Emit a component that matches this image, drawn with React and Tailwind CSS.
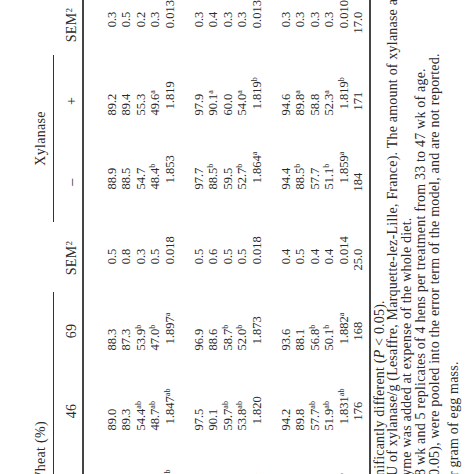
import React from "react";

// cells are "int.frac^sup"; empty rows are group headings whose labels are cut off
const rows = [
  null,
  ["", "89.0", "88.3", "0.5", "88.9", "89.2", "0.3"],
  ["", "89.3", "87.3", "0.8", "88.5", "89.4", "0.5"],
  ["", "54.4^ab", "53.9^b", "0.3", "54.7", "55.3", "0.2"],
  ["", "48.7^ab", "47.0^b", "0.5", "48.4^b", "49.6^a", "0.3"],
  ["1.866^ab", "1.847^ab", "1.897^a", "0.018", "1.853", "1.819", "0.013"],
  null,
  ["", "97.5", "96.9", "0.5", "97.7", "97.9", "0.3"],
  ["", "90.1", "88.6", "0.6", "88.5^b", "90.1^a", "0.4"],
  ["", "59.7^ab", "58.7^b", "0.5", "59.5", "60.0", "0.3"],
  ["", "53.8^ab", "52.0^b", "0.5", "52.7^b", "54.0^a", "0.3"],
  ["1.803^a", "1.820", "1.873", "0.018", "1.864^a", "1.819^b", "0.013"],
  null,
  ["", "94.2", "93.6", "0.4", "94.4", "94.6", "0.3"],
  ["", "89.8", "88.1", "0.5", "88.5^b", "89.8^a", "0.3"],
  ["", "57.7^ab", "56.8^b", "0.4", "57.7", "58.8", "0.3"],
  ["", "51.9^ab", "50.1^b", "0.4", "51.1^b", "52.3^a", "0.3"],
  ["1.807^b", "1.831^ab", "1.882^a", "0.014", "1.859^a", "1.819^b", "0.010"],
  ["", "176", "168", "25.0", "184", "171", "17.0"],
];

// width of the box each header (and whole-number cell) is centred in
const heads = ["w-[94px]", "w-[94px]", "w-[94px]", "w-[80px]", "w-[70px]", "w-[84px]", "w-[72px]"];

const Num = ({ v, col }) => {
  if (!v) return <div />;
  const [n, s] = v.split("^");
  const i = n.indexOf(".");
  if (i < 0) return <div className={`${heads[col]} text-center`}>{n}</div>;
  return (
    <div className="flex whitespace-nowrap">
      <span className="w-[40px] text-right">{n.slice(0, i)}</span>
      <span>
        {n.slice(i)}
        {s && <sup className="text-[8px] leading-none">{s}</sup>}
      </span>
    </div>
  );
};

const grid = "grid grid-cols-[75px_81px_80px_80px_81px_74px_82px_61px]";
const Sup2 = () => <sup className="text-[9px] leading-none">2</sup>;

export default function App() {
  return (
    <div className="w-[474px] h-[474px] overflow-hidden bg-white text-[#2a2a2a] font-['Liberation_Serif',serif]">
      <div className="w-[474px] h-[474px] -rotate-90">
        <div className="ml-[-140px] w-[800px] pt-[32px]">
          {/* spanner headings */}
          <div className="flex h-[17px] items-center text-[14px] tracking-[0.3px] leading-none whitespace-nowrap">
            <div className="w-[10px]" />
            <div className="w-[302px] text-center">Wheat (%)</div>
            <div className="w-[80px]" />
            <div className="w-[167px] text-center">Xylanase</div>
          </div>
          <div className="flex h-px mt-[4px]">
            <div className="w-[10px]" />
            <div className="w-[312px] bg-[#333]" />
            <div className="w-[70px]" />
            <div className="w-[167px] bg-[#333]" />
          </div>
          {/* column headings */}
          <div className={`${grid} h-[16px] mt-[10px] items-center text-[14px] tracking-[0.3px] leading-none`}>
            <div />
            <div />
            <div className="w-[94px] text-center">46</div>
            <div className="w-[94px] text-center">69</div>
            <div className="w-[80px] text-center">
              SEM<Sup2 />
            </div>
            <div className="w-[70px] text-center">–</div>
            <div className="w-[84px] text-center">+</div>
            <div className="w-[72px] text-center">
              SEM<Sup2 />
            </div>
          </div>
          <div className="h-[2px] mt-[2px] bg-[#444]" />
          {/* body */}
          <div className="pt-[6px] text-[12.5px] leading-none">
            {rows.map((r, k) => (
              <div key={k} className={`${grid} h-[14.5px] items-center`}>
                <div />
                {r && r.map((v, j) => <Num key={j} v={v} col={j} />)}
              </div>
            ))}
          </div>
          <div className="h-[2px] mt-[3px] bg-[#444]" />
          {/* footnotes */}
          <div className="pl-[138px] pt-[2px] text-[14px] tracking-[0.2px] whitespace-nowrap">
            <p className="h-[13.8px] leading-[13.8px]">
              nificantly different (<i>P</i> &lt; 0.05).
            </p>
            <p className="h-[13.8px] leading-[13.8px]">
              U of xylanase/g (Lesaffre, Marquette-lez-Lille, France). The amount of xylanase activity in the diets was
            </p>
            <p className="h-[13.8px] leading-[13.8px]">yme was added at expense of the whole diet.</p>
            <p className="h-[13.8px] leading-[13.8px]">
              8 wk and 5 replicates of 4 hens per treatment from 33 to 47 wk of age.
            </p>
            <p className="h-[13.8px] leading-[13.8px]">
              0.05), were pooled into the error term of the model, and are not reported.
            </p>
            <p className="h-[13.8px] leading-[13.8px] mt-[6px]">r gram of egg mass.</p>
          </div>
        </div>
      </div>
    </div>
  );
}
